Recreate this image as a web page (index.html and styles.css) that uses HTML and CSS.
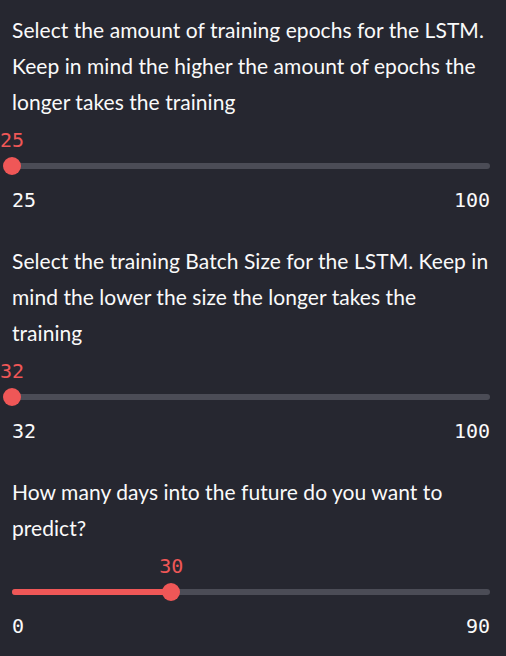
FILE: index.html
```html
<!DOCTYPE html>
<html lang="en">
<head>
<meta charset="utf-8">
<title>LSTM settings</title>
<link rel="stylesheet" href="styles.css">
</head>
<body>
<main class="panel">
  <section class="slider">
    <p class="label">Select the amount of training epochs for the LSTM. Keep in mind the higher the amount of epochs the longer takes the training</p>
    <div class="widget">
      <div class="value-row"><span class="value" style="left: 0%">25</span></div>
      <div class="track">
        <div class="fill" style="width: 0%"></div>
        <div class="thumb" style="left: 0%"></div>
      </div>
      <div class="ticks"><span>25</span><span>100</span></div>
    </div>
  </section>
  <section class="slider">
    <p class="label">Select the training Batch Size for the LSTM. Keep in mind the lower the size the longer takes the training</p>
    <div class="widget">
      <div class="value-row"><span class="value" style="left: 0%">32</span></div>
      <div class="track">
        <div class="fill" style="width: 0%"></div>
        <div class="thumb" style="left: 0%"></div>
      </div>
      <div class="ticks"><span>32</span><span>100</span></div>
    </div>
  </section>
  <section class="slider">
    <p class="label">How many days into the future do you want to predict?</p>
    <div class="widget">
      <div class="value-row"><span class="value" style="left: 33.333%">30</span></div>
      <div class="track">
        <div class="fill" style="width: 33.333%"></div>
        <div class="thumb" style="left: 33.333%"></div>
      </div>
      <div class="ticks"><span>0</span><span>90</span></div>
    </div>
  </section>
</main>
</body>
</html>
```
FILE: styles.css
```css
html, body {
  margin: 0;
  padding: 0;
  background: #262730;
}
body {
  width: 506px;
  height: 656px;
  overflow: hidden;
  color: #fafafa;
  font-family: Lato, "Noto Sans", sans-serif;
}
.panel {
  display: flex;
  flex-direction: column;
  gap: 31px;
  padding: 12px 16px 0 12px;
}
.slider {
  display: flex;
  flex-direction: column;
}
.label {
  margin: 0;
  font-size: 21px;
  line-height: 36px;
  letter-spacing: 0.05px;
}
.widget {
  display: flex;
  flex-direction: column;
  padding-top: 8px;
}
.value-row {
  position: relative;
  height: 24px;
  margin-bottom: 11px;
}
.value {
  position: absolute;
  top: 0;
  transform: translateX(-50%);
  font-family: "DejaVu Sans Mono", monospace;
  font-size: 20px;
  line-height: 24px;
  color: #ef5757;
}
.track {
  position: relative;
  height: 6px;
  border-radius: 3px;
  background: #4b4c56;
}
.fill {
  height: 100%;
  border-radius: 3px;
  background: #ef5757;
}
.thumb {
  position: absolute;
  top: 50%;
  width: 18px;
  height: 18px;
  border-radius: 50%;
  background: #ef5757;
  transform: translate(-50%, -50%);
}
.ticks {
  display: flex;
  justify-content: space-between;
  margin-top: 19px;
  font-family: "DejaVu Sans Mono", monospace;
  font-size: 20px;
  line-height: 24px;
}
```
